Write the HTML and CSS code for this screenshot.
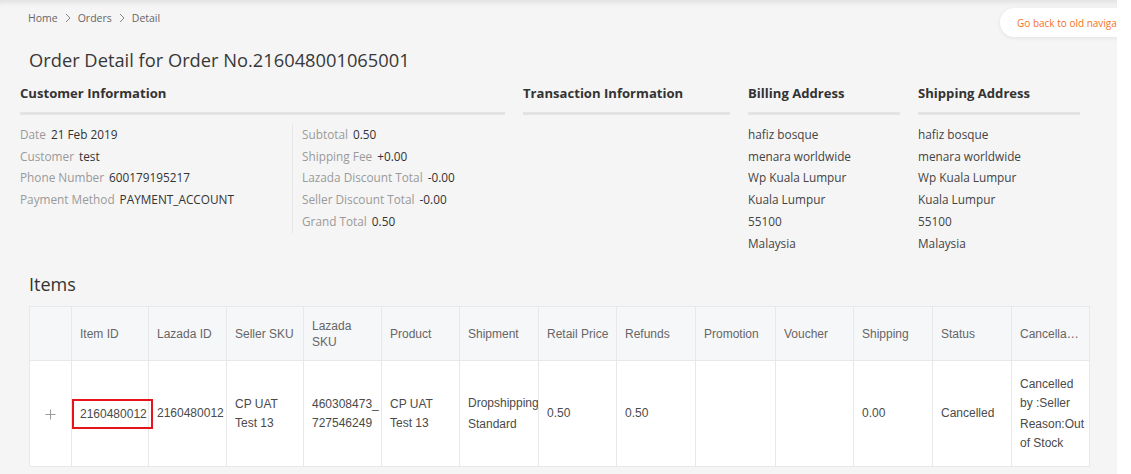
FILE: index.html
```html
<!DOCTYPE html>
<html lang="en">
<head>
<meta charset="utf-8">
<title>Order Detail</title>
<link rel="stylesheet" href="styles.css">
</head>
<body>
<div class="page">
  <div class="topbar">
    <nav class="crumbs">
      <span>Home</span>
      <svg class="chev" viewBox="0 0 6 10" width="6" height="10"><polyline points="1,1 5,5 1,9" fill="none" stroke="#888" stroke-width="1"/></svg>
      <span>Orders</span>
      <svg class="chev" viewBox="0 0 6 10" width="6" height="10"><polyline points="1,1 5,5 1,9" fill="none" stroke="#888" stroke-width="1"/></svg>
      <span>Detail</span>
    </nav>
    <a class="oldnav">Go back to old navigation</a>
  </div>

  <h1 class="title">Order Detail for Order No.216048001065001</h1>

  <div class="info">
    <section class="block customer">
      <h2 class="block-head">Customer Information</h2>
      <div class="cust-body">
        <div class="kv-col kv-left">
          <div class="kv"><span class="k">Date</span><span class="v">21 Feb 2019</span></div>
          <div class="kv"><span class="k">Customer</span><span class="v">test</span></div>
          <div class="kv"><span class="k">Phone Number</span><span class="v">600179195217</span></div>
          <div class="kv"><span class="k">Payment Method</span><span class="v">PAYMENT_ACCOUNT</span></div>
        </div>
        <div class="kv-col kv-right">
          <div class="kv"><span class="k">Subtotal</span><span class="v">0.50</span></div>
          <div class="kv"><span class="k">Shipping Fee</span><span class="v">+0.00</span></div>
          <div class="kv"><span class="k">Lazada Discount Total</span><span class="v">-0.00</span></div>
          <div class="kv"><span class="k">Seller Discount Total</span><span class="v">-0.00</span></div>
          <div class="kv"><span class="k">Grand Total</span><span class="v">0.50</span></div>
        </div>
      </div>
    </section>
    <section class="block trans">
      <h2 class="block-head">Transaction Information</h2>
    </section>
    <section class="block billing">
      <h2 class="block-head">Billing Address</h2>
      <div class="lines">
        <div>hafiz bosque</div>
        <div>menara worldwide</div>
        <div>Wp Kuala Lumpur</div>
        <div>Kuala Lumpur</div>
        <div>55100</div>
        <div>Malaysia</div>
      </div>
    </section>
    <section class="block shipping">
      <h2 class="block-head">Shipping Address</h2>
      <div class="lines">
        <div>hafiz bosque</div>
        <div>menara worldwide</div>
        <div>Wp Kuala Lumpur</div>
        <div>Kuala Lumpur</div>
        <div>55100</div>
        <div>Malaysia</div>
      </div>
    </section>
  </div>

  <h2 class="items-title">Items</h2>

  <table class="items">
    <colgroup>
      <col class="c-exp"><col class="c77"><col class="c78"><col class="c77"><col class="c78"><col class="c78"><col class="c79"><col class="c78"><col class="c79"><col class="c80"><col class="c78"><col class="c79"><col class="c79"><col class="c78">
    </colgroup>
    <thead>
      <tr>
        <th></th>
        <th>Item ID</th>
        <th>Lazada ID</th>
        <th>Seller SKU</th>
        <th class="wrap">Lazada SKU</th>
        <th>Product</th>
        <th>Shipment</th>
        <th>Retail Price</th>
        <th>Refunds</th>
        <th>Promotion</th>
        <th>Voucher</th>
        <th>Shipping</th>
        <th>Status</th>
        <th class="ellip">Cancellation Reason</th>
      </tr>
    </thead>
    <tbody>
      <tr>
        <td class="exp"><svg viewBox="0 0 11 11" width="11" height="11"><path d="M5.5 0.5v10M0.5 5.5h10" stroke="#9a9a9a" stroke-width="1" fill="none"/></svg></td>
        <td><span class="marked">2160480012</span></td>
        <td>2160480012</td>
        <td>CP UAT Test 13</td>
        <td>460308473_<wbr>727546249</td>
        <td>CP UAT Test 13</td>
        <td class="clip"><div>Dropshipping</div><div class="sub">Standard</div></td>
        <td>0.50</td>
        <td>0.50</td>
        <td></td>
        <td></td>
        <td>0.00</td>
        <td>Cancelled</td>
        <td><div>Cancelled by :Seller</div><div class="sub">Reason:Out of Stock</div></td>
      </tr>
    </tbody>
  </table>
</div>
</body>
</html>
```

FILE: styles.css
```css
* { box-sizing: border-box; }

html, body {
  margin: 0;
  padding: 0;
  background: #ffffff;
}

.page {
  width: 1117px;
  height: 474px;
  overflow: hidden;
  position: relative;
  background: #f5f5f5;
  box-shadow: inset 0 6px 5px -3px rgba(0, 0, 0, 0.08);
  font-family: "Open Sans", "Noto Sans", sans-serif;
  color: #333;
}

/* top bar */
.topbar {
  height: 26px;
  padding: 10px 0 0 28px;
}

.crumbs {
  display: flex;
  align-items: center;
  gap: 7px;
  font-size: 10.5px;
  line-height: 16px;
  color: #666;
}

.chev { display: block; }

.oldnav {
  position: absolute;
  left: 1000px;
  top: 8px;
  height: 29px;
  width: 150px;
  padding-left: 17px;
  display: flex;
  align-items: center;
  background: #ffffff;
  border-radius: 15px;
  box-shadow: 0 1px 4px rgba(0, 0, 0, 0.08);
  color: #f57224;
  font-size: 10px;
  white-space: nowrap;
}

/* title */
.title {
  margin: 21px 0 0 29px;
  font-size: 18.3px;
  line-height: 26px;
  font-weight: 400;
  color: #383838;
}

/* info blocks */
.info {
  display: flex;
  gap: 18px;
  margin-top: 11px;
  padding-left: 20px;
}

.block-head {
  margin: 0;
  font-size: 13.1px;
  line-height: 18px;
  font-weight: 700;
  color: #333;
  padding-bottom: 10px;
  border-bottom: 3px solid #e3e3e3;
}

.customer { width: 485px; }
.trans { width: 207px; }
.billing { width: 152px; }
.shipping { width: 162px; }

.cust-body {
  display: flex;
  padding-top: 9px;
}

.kv-col {
  font-size: 11.8px;
  line-height: 21.7px;
}

.kv-left { width: 272px; }

.kv-right {
  border-left: 1px solid #e6e6e6;
  padding-left: 9px;
}

.kv { white-space: nowrap; }

.k {
  color: #9a9a9a;
  margin-right: 5px;
}

.v { color: #333; }

.lines {
  padding-top: 9px;
  font-size: 11.8px;
  line-height: 21.7px;
  color: #444;
}

/* items */
.items-title {
  margin: 18px 0 0 29px;
  font-size: 18px;
  line-height: 24px;
  font-weight: 400;
  color: #333;
}

.items {
  margin: 10px 0 0 29px;
  width: 1060px;
  table-layout: fixed;
  border-collapse: collapse;
  font-family: "Liberation Sans", Arial, sans-serif;
  font-size: 12px;
  background: #fff;
}

.c-exp { width: 42px; }
.c77 { width: 77px; }
.c78 { width: 78px; }
.c79 { width: 79px; }
.c80 { width: 80px; }

.items th,
.items td {
  border: 1px solid #e8e8e8;
  padding: 0 8px;
  vertical-align: middle;
  text-align: left;
}

.items thead tr { height: 54px; }

.items th {
  background: #f6f7f9;
  font-weight: 400;
  color: #666;
  line-height: 16px;
  white-space: nowrap;
  padding-right: 5px;
}

.items th.wrap { white-space: normal; }

.items th.ellip {
  overflow: hidden;
  text-overflow: ellipsis;
  padding-right: 8px;
}

.items tbody tr { height: 106px; }

.items td {
  color: #4a4a4a;
  line-height: 19px;
}

.items td.exp {
  text-align: center;
  padding: 0;
}

.items td.exp svg { display: inline-block; vertical-align: middle; }

.items td.clip { overflow: hidden; }

.items td .sub { margin-top: 2px; }

.marked {
  display: inline-block;
  white-space: nowrap;
  margin-left: -8px;
  padding: 5px 4px 5px 6px;
  line-height: 16px;
  border: 2px solid #e8141b;
}
```
